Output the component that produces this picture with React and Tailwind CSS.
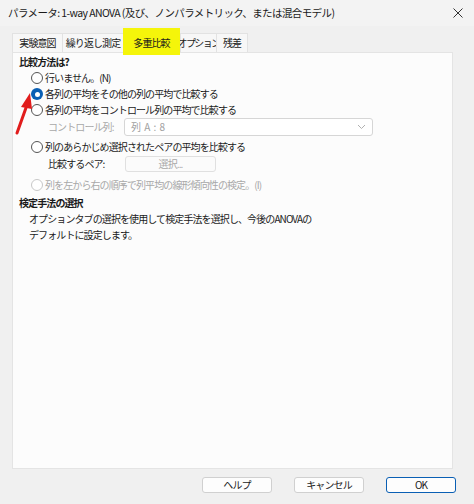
const font = { fontFamily: '"Noto Sans CJK JP", "Noto Sans", sans-serif' };

function Radio({ checked, disabled, label }) {
  return (
    <div className={`flex h-[16px] items-center pl-[12px] ${disabled ? "text-[#a8a8a8]" : "text-[#1a1a1a]"}`}>
      {checked ? (
        <span className="flex h-[12px] w-[12px] items-center justify-center rounded-full bg-[#0a5fb4]">
          <span className="h-[5px] w-[5px] rounded-full bg-white" />
        </span>
      ) : (
        <span className={`h-[12px] w-[12px] rounded-full border ${disabled ? "border-[#c8c8c8]" : "border-[#555]"} bg-white`} />
      )}
      <span className="ml-[2px]">{label}</span>
    </div>
  );
}

function Tab({ label, w, active, last }) {
  if (active) {
    return (
      <div className={`relative z-10 flex h-[27px] ${w} translate-y-[3px] items-center justify-center whitespace-nowrap bg-[#f5f50a] pt-[2px] text-[#1a1a1a]`}>
        {label}
      </div>
    );
  }
  return (
    <div
      className={`flex h-[19px] ${w} items-center justify-center whitespace-nowrap border-t border-l border-[#e2e2e2] bg-[#f7f7f7] text-[#1a1a1a] ${
        last ? "border-r" : ""
      }`}
    >
      {label}
    </div>
  );
}

function Button({ label, primary }) {
  return (
    <div
      className={`flex h-[16px] w-[70px] items-center justify-center rounded-[3px] border bg-[#fdfdfd] text-[#1a1a1a] ${
        primary ? "border-[#0a5fb4]" : "border-[#d0d0d0]"
      }`}
    >
      {label}
    </div>
  );
}

export default function App() {
  return (
    <div style={font} className="relative h-[504px] w-[474px] overflow-hidden bg-[#f0f0f0] text-[10px] leading-none tracking-[-0.9px]">
      {/* title bar */}
      <div className="flex h-[26px] items-center justify-between bg-[#f3f3f3] pl-[8px] pr-[8px] text-[10.5px] tracking-[-0.6px] text-[#1a1a1a]">
        <span>パラメータ: 1-way ANOVA (及び、ノンパラメトリック、または混合モデル)</span>
        <svg width="12" height="12" viewBox="0 0 12 12" className="mr-[2px]">
          <path d="M1.5 1.5 L10.5 10.5 M10.5 1.5 L1.5 10.5" stroke="#333" strokeWidth="1" />
        </svg>
      </div>

      {/* tabs */}
      <div className="relative z-10 mt-[7px] flex h-[19px] items-end pl-[12px]">
        <Tab label="実験意図" w="w-[50px]" />
        <Tab label="繰り返し測定" w="w-[61px]" />
        <Tab label="多重比較" w="w-[57px]" active />
        <Tab label={<span className="tracking-[-1.6px]">オプション</span>} w="w-[36px]" />
        <Tab label="残差" w="w-[32px]" last />
      </div>

      {/* panel */}
      <div className="ml-[12px] h-[417px] w-[441px] border border-[#e4e4e4] bg-[#fcfcfc] pl-[6px] pt-[1px] text-[#1a1a1a]">
        <div className="flex h-[16px] items-center font-bold">比較方法は?</div>
        <Radio label="行いません。(N)" />
        <Radio checked label="各列の平均をその他の列の平均で比較する" />
        <Radio label="各列の平均をコントロール列の平均で比較する" />
        <div className="flex h-[18px] items-center pl-[29px]">
          <span className="w-[76px] text-[#a8a8a8]">コントロール列:</span>
          <div className="flex h-[18px] w-[249px] items-center justify-between rounded-[3px] border border-[#d6d6d6] bg-white pl-[6px] pr-[6px] text-[#a0a0a0]">
            <span className="tracking-[0.5px]">列 A : 8</span>
            <svg width="9" height="6" viewBox="0 0 9 6">
              <path d="M1 1 L4.5 4.5 L8 1" fill="none" stroke="#b0b0b0" strokeWidth="1" />
            </svg>
          </div>
        </div>
        <div className="mt-[3px]">
          <Radio label="列のあらかじめ選択されたペアの平均を比較する" />
        </div>
        <div className="mt-[1px] flex h-[16px] items-center pl-[29px]">
          <span className="w-[77px]">比較するペア:</span>
          <div className="flex h-[16px] w-[91px] items-center justify-center rounded-[3px] border border-[#e0e0e0] bg-[#fbfbfb] text-[#a8a8a8]">
            選択...
          </div>
        </div>
        <div className="mt-[5px]">
          <Radio disabled label="列を左から右の順序で列平均の線形傾向性の検定。(I)" />
        </div>
        <div className="mt-[2px] flex h-[16px] items-center font-bold">検定手法の選択</div>
        <div className="pl-[10px]">
          <div className="flex h-[16px] items-center">オプションタブの選択を使用して検定手法を選択し、今後のANOVAの</div>
          <div className="flex h-[16px] items-center">デフォルトに設定します。</div>
        </div>
      </div>

      {/* buttons */}
      <div className="mt-[8px] flex justify-end gap-[22px] pr-[18px]">
        <Button label="ヘルプ" />
        <Button label="キャンセル" />
        <Button label="OK" primary />
      </div>

      {/* red arrow annotation */}
      <svg className="pointer-events-none absolute left-0 top-0 z-20" width="474" height="504">
        <path d="M17 133 L27 105" stroke="#e11d1d" strokeWidth="3" strokeLinecap="round" />
        <path d="M30 93 L21 107 L32 109 Z" fill="#e11d1d" />
      </svg>
    </div>
  );
}
